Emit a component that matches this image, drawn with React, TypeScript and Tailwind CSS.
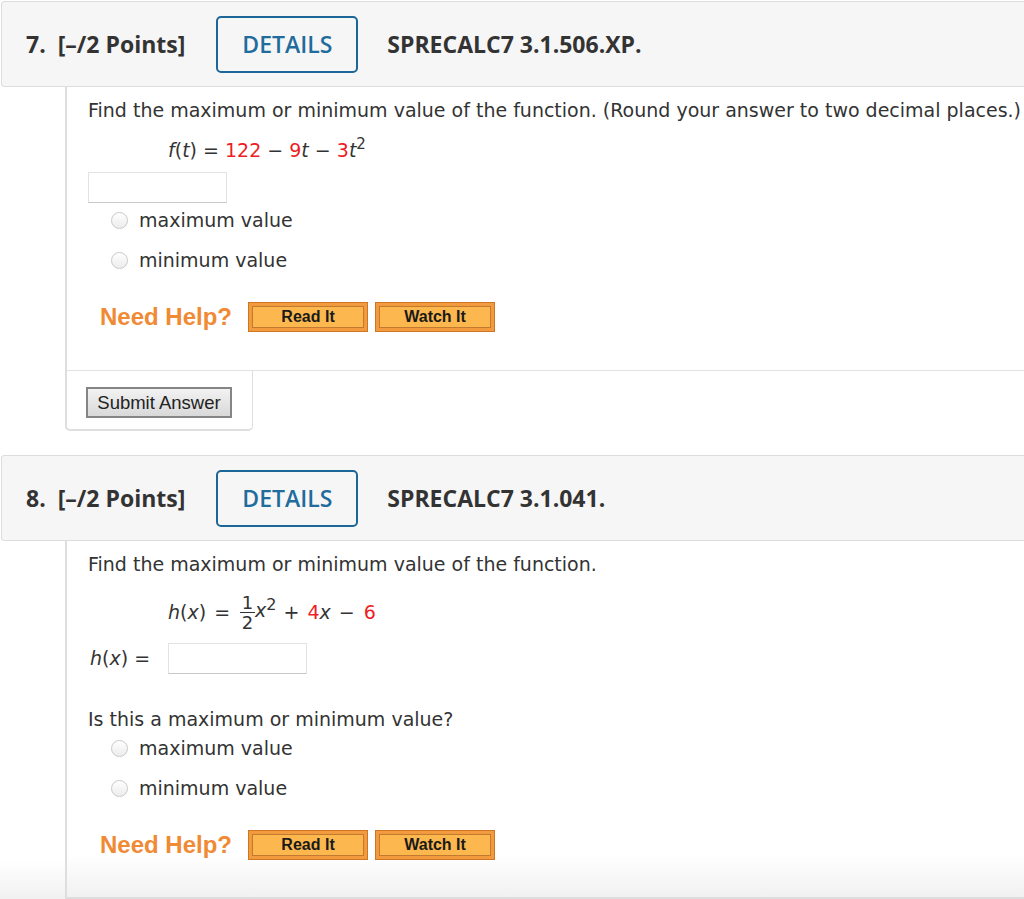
import React from "react";

const body = "font-['DejaVu_Sans',Verdana,sans-serif]";

function Header({ num, code }: { num: string; code: string }) {
  return (
    <div className="ml-px h-[86px] w-[1040px] border border-[#dddddd] rounded-[3px] bg-[#f6f6f6] flex items-center pl-[24px] font-['Open_Sans',sans-serif] font-bold text-[23px] text-[#333333]">
      <span>{num}</span>
      <span className="ml-[12px]">[–/2 Points]</span>
      <div className="ml-[31px] h-[57px] w-[142px] border-2 border-[#1d6798] rounded-[5px] flex items-center justify-center text-[#1f6c9d] font-semibold">
        DETAILS
      </div>
      <span className="ml-[29px]">{code}</span>
    </div>
  );
}

function Radio({ label }: { label: string }) {
  return (
    <div className="flex items-center h-[32px] ml-[23px]">
      <div className="w-[17px] h-[17px] rounded-full border border-[#c9c9c9] bg-gradient-to-b from-white to-[#ececec]" />
      <span className="ml-[11px] text-[19px] text-[#333333]">{label}</span>
    </div>
  );
}

function OrangeBtn({ label }: { label: string }) {
  return (
    <div className="w-[120px] h-[30px] border border-[#cf7624] bg-[#f29a3e] p-[3px]">
      <div className="w-full h-full border border-[#c27a30] bg-[#fcb84f] flex items-center justify-center font-['Liberation_Sans',Arial,sans-serif] font-bold text-[16px] text-[#1a1a1a]">
        {label}
      </div>
    </div>
  );
}

function NeedHelp({ mt }: { mt: string }) {
  return (
    <div className={`flex items-center ml-[12px] ${mt}`}>
      <span className="font-['Liberation_Sans',Arial,sans-serif] font-bold text-[24px] text-[#f08a34] leading-[30px]">
        Need Help?
      </span>
      <div className="ml-[16px]">
        <OrangeBtn label="Read It" />
      </div>
      <div className="ml-[7px]">
        <OrangeBtn label="Watch It" />
      </div>
    </div>
  );
}

const red = "text-[#ee1c25]";

export default function App() {
  return (
    <div className={`relative w-[1024px] h-[899px] overflow-hidden bg-white ${body} text-[#333333]`}>
      <div className="h-px" />
      <Header num="7." code="SPRECALC7 3.1.506.XP." />
      {/* Q7 content */}
      <div className="ml-[65px] w-[1000px] border-l-2 border-b border-l-[#dedede] border-b-[#e2e2e2] pl-[21px] pt-[11px] pb-[38px]">
        <div className="text-[19px] leading-[24px] whitespace-nowrap">
          Find the maximum or minimum value of the function. (Round your answer to two decimal places.)
        </div>
        <div className="mt-[16px] ml-[80px] text-[19px] leading-[24px] whitespace-nowrap">
          <i>f</i>(<i>t</i>) = <span className={red}>122</span> − <span className={red}>9</span>
          <i>t</i> − <span className={red}>3</span>
          <i>t</i>
          <span className="text-[15px] relative -top-[8px]">2</span>
        </div>
        <div className="mt-[8px] w-[139px] h-[31px] border border-[#e3e3e3] border-b-[#c8c8c8] bg-white" />
        <div className="mt-[1px]">
          <Radio label="maximum value" />
        </div>
        <div className="mt-[8px]">
          <Radio label="minimum value" />
        </div>
        <NeedHelp mt="mt-[26px]" />
      </div>
      <div className="ml-[65px] w-[188px] h-[60px] border-l-2 border-r border-b-2 border-[#dedede] rounded-b-[5px] pl-[19px] pt-[16px]">
        <div className="w-[146px] h-[31px] border-2 border-[#858585] bg-gradient-to-b from-[#f2f2f2] to-[#d9d9d9] flex items-center justify-center font-['Liberation_Sans',Arial,sans-serif] text-[18.5px] text-[#222222]">
          Submit Answer
        </div>
      </div>

      <div className="h-[24px]" />
      <Header num="8." code="SPRECALC7 3.1.041." />
      {/* Q8 content */}
      <div className="ml-[65px] w-[1000px] h-[358px] border-l-2 border-b-2 border-l-[#dedede] border-b-[#dddddd] pl-[21px] pt-[11px] bg-gradient-to-b from-white from-[88%] to-[#f1f1f1]">
        <div className="text-[19px] leading-[24px] whitespace-nowrap">
          Find the maximum or minimum value of the function.
        </div>
        <div className="mt-[16px] ml-[80px] h-[40px] flex items-center text-[19px] whitespace-nowrap">
          <i>h</i>(<i>x</i>)<span className="ml-[8px]">=</span>
          <span className="inline-flex flex-col items-center ml-[10px] text-[18px] leading-[19px]">
            <span>1</span>
            <span className="block w-[15px] h-px bg-[#333333]" />
            <span>2</span>
          </span>
          <span className="relative -top-[2px]">
            <i>x</i>
            <span className="text-[16px] relative -top-[7px]">2</span>
          </span>
          <span className="ml-[7px]">+</span>
          <span className={`${red} ml-[8px]`}>4</span>
          <i>x</i>
          <span className="ml-[8px]">−</span>
          <span className={`${red} ml-[9px]`}>6</span>
        </div>
        <div className="mt-[11px] flex items-center">
          <span className="ml-[2px] text-[19px] whitespace-nowrap">
            <i>h</i>(<i>x</i>) =
          </span>
          <div className="ml-[18px] w-[139px] h-[31px] border border-[#e3e3e3] border-b-[#c8c8c8] bg-white" />
        </div>
        <div className="mt-[33px] text-[19px] leading-[24px] whitespace-nowrap">
          Is this a maximum or minimum value?
        </div>
        <div className="mt-[1px]">
          <Radio label="maximum value" />
        </div>
        <div className="mt-[8px]">
          <Radio label="minimum value" />
        </div>
        <NeedHelp mt="mt-[26px]" />
      </div>
      <div className="absolute left-0 top-[860px] w-[65px] h-[39px] bg-gradient-to-b from-white to-[#f1f1f1]" />
    </div>
  );
}
